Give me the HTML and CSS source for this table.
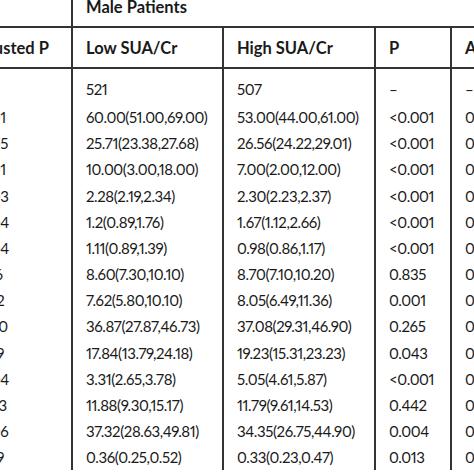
FILE: index.html
```html
<!DOCTYPE html>
<html lang="en">
<head>
<meta charset="utf-8">
<title>SUA/Cr table</title>
<link rel="stylesheet" href="styles.css">
</head>
<body>
<div class="frame">
<table class="data">
  <colgroup>
    <col class="c-adj">
    <col class="c-low">
    <col class="c-high">
    <col class="c-p">
    <col class="c-adj2">
  </colgroup>
  <thead>
    <tr class="group">
      <th class="gl"></th>
      <th colspan="4" class="gr">Male Patients</th>
    </tr>
    <tr class="heads">
      <th>Adjusted P</th>
      <th>Low SUA/Cr</th>
      <th>High SUA/Cr</th>
      <th>P</th>
      <th>Adjusted P</th>
    </tr>
  </thead>
  <tbody>
    <tr class="first"><td></td><td>521</td><td>507</td><td>–</td><td>–</td></tr>
    <tr><td>0.001</td><td>60.00(51.00,69.00)</td><td>53.00(44.00,61.00)</td><td>&lt;0.001</td><td>0.001</td></tr>
    <tr><td>0.005</td><td>25.71(23.38,27.68)</td><td>26.56(24.22,29.01)</td><td>&lt;0.001</td><td>0.001</td></tr>
    <tr><td>0.001</td><td>10.00(3.00,18.00)</td><td>7.00(2.00,12.00)</td><td>&lt;0.001</td><td>0.001</td></tr>
    <tr><td>0.003</td><td>2.28(2.19,2.34)</td><td>2.30(2.23,2.37)</td><td>&lt;0.001</td><td>0.001</td></tr>
    <tr><td>0.004</td><td>1.2(0.89,1.76)</td><td>1.67(1.12,2.66)</td><td>&lt;0.001</td><td>0.001</td></tr>
    <tr><td>0.004</td><td>1.11(0.89,1.39)</td><td>0.98(0.86,1.17)</td><td>&lt;0.001</td><td>0.001</td></tr>
    <tr><td>0.136</td><td>8.60(7.30,10.10)</td><td>8.70(7.10,10.20)</td><td>0.835</td><td>0.835</td></tr>
    <tr><td>0.012</td><td>7.62(5.80,10.10)</td><td>8.05(6.49,11.36)</td><td>0.001</td><td>0.001</td></tr>
    <tr><td>0.340</td><td>36.87(27.87,46.73)</td><td>37.08(29.31,46.90)</td><td>0.265</td><td>0.265</td></tr>
    <tr><td>0.019</td><td>17.84(13.79,24.18)</td><td>19.23(15.31,23.23)</td><td>0.043</td><td>0.043</td></tr>
    <tr><td>0.004</td><td>3.31(2.65,3.78)</td><td>5.05(4.61,5.87)</td><td>&lt;0.001</td><td>0.001</td></tr>
    <tr><td>0.443</td><td>11.88(9.30,15.17)</td><td>11.79(9.61,14.53)</td><td>0.442</td><td>0.442</td></tr>
    <tr><td>0.006</td><td>37.32(28.63,49.81)</td><td>34.35(26.75,44.90)</td><td>0.004</td><td>0.004</td></tr>
    <tr><td>0.019</td><td>0.36(0.25,0.52)</td><td>0.33(0.23,0.47)</td><td>0.013</td><td>0.013</td></tr>
  </tbody>
</table>
</div>
</body>
</html>
```
FILE: styles.css
```css
html, body {
  margin: 0;
  padding: 0;
  background: #fff;
  overflow: hidden;
}
.frame {
  width: 474px;
  height: 474px;
  overflow: hidden;
}
.data {
  border-collapse: collapse;
  table-layout: fixed;
  width: 612px;
  margin-left: -44px;
  margin-top: -12px;
  font-family: "Lato", "Open Sans", sans-serif;
  font-size: 15px;
  line-height: 18px;
  color: #1a1a1a;
  font-variant-numeric: proportional-nums;
}
.c-adj { width: 116px; }
.c-low { width: 151px; }
.c-high { width: 152px; }
.c-p { width: 76px; }
.c-adj2 { width: 117px; }
.data th, .data td {
  text-align: left;
  padding: 4px 0 4px 13px;
  white-space: nowrap;
  overflow: hidden;
  border-left: 2px solid #333;
}
.data td {
  line-height: 18.15px;
  letter-spacing: -0.4px;
}
.data th:first-child, .data td:first-child {
  border-left: none;
}
.data th {
  font-weight: 700;
  font-size: 16.5px;
}
.group th {
  padding-top: 10px;
  padding-bottom: 10px;
  border-bottom: 2px solid #333;
}
.heads th {
  padding-top: 11px;
  padding-bottom: 10px;
  border-bottom: 2px solid #333;
}
.first td {
  padding-top: 11px;
  padding-bottom: 6px;
}
```
